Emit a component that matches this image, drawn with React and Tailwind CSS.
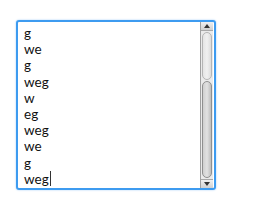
import React from "react";

const lines = ["g", "we", "g", "weg", "w", "eg", "weg", "we", "g", "weg"];

export default function App() {
  return (
    <div className="w-[269px] h-[217px] bg-white pt-[20px] pl-[16px]">
      <div className="w-[200px] h-[170px] border-2 border-[#3d9bf0] rounded-[3px] flex shadow-[0_0_2px_#9cc8f5] overflow-hidden">
        <div
          className="flex-1 pl-[6px] pt-[3px] text-[13.5px] leading-[16.2px] text-[#111]"
          style={{ fontFamily: 'Lato, "Open Sans", sans-serif' }}
        >
          {lines.map((l, i) => (
            <div key={i} className="flex items-center">
              {l}
              {i === lines.length - 1 && (
                <span className="inline-block w-[1px] h-[15px] bg-[#333] ml-[1px]" />
              )}
            </div>
          ))}
        </div>
        <div className="w-[13px] mr-[1px] flex flex-col border-l border-[#a0a0a0] bg-[#eaeaea]">
          <div className="h-[9px] flex items-center justify-center bg-gradient-to-b from-[#f0f0f0] to-[#d0d0d0] border-b border-[#a8a8a8]">
            <div className="w-0 h-0 border-l-[3px] border-r-[3px] border-b-[4px] border-l-transparent border-r-transparent border-b-[#333]" />
          </div>
          <div className="flex-1 flex flex-col px-[1px] py-[1px] gap-[1px]">
            <div className="h-[48px] rounded-[5px] border border-[#b5b5b5] bg-gradient-to-r from-[#e4e4e4] via-[#f0f0f0] to-[#dcdcdc]" />
            <div className="flex-1 rounded-[5px] border border-[#909090] bg-gradient-to-r from-[#cfcfcf] via-[#e2e2e2] to-[#bdbdbd]" />
          </div>
          <div className="h-[9px] flex items-center justify-center bg-gradient-to-b from-[#f0f0f0] to-[#d0d0d0] border-t border-[#a8a8a8]">
            <div className="w-0 h-0 border-l-[3px] border-r-[3px] border-t-[4px] border-l-transparent border-r-transparent border-t-[#333]" />
          </div>
        </div>
      </div>
    </div>
  );
}
